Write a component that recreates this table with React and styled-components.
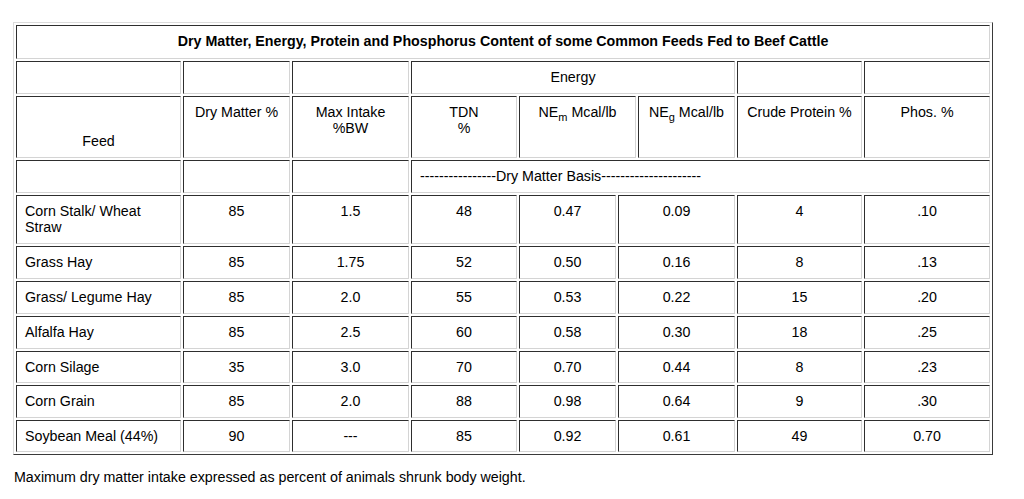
import styled, { createGlobalStyle } from "styled-components";

const GlobalStyle = createGlobalStyle`
    html, body {
        margin: 0;
        padding: 0;
        background: #fff;
    }
    body {
        font-family: "Liberation Sans", Arial, sans-serif;
        font-size: 14.25px;
        color: #000;
    }
`;

const Page = styled.div`
    padding: 22px 0 0 13px;
`;

const FeedTable = styled.table`
    width: 980px;
    table-layout: fixed;
    border-collapse: separate;
    border-spacing: 2px;
    border: 1px solid;
    border-color: #dcdcdc #3a3a3a #3a3a3a #dcdcdc;
`;

const Cell = styled.td`
    box-sizing: border-box;
    border: 1px solid;
    border-color: #2e2e2e #d4d4d4 #d4d4d4 #2e2e2e;
    padding: 0 8px;
    line-height: 16px;
    vertical-align: ${(p) => p.$valign || "top"};
    text-align: ${(p) => p.$align || "center"};
    font-weight: ${(p) => (p.$bold ? "bold" : "normal")};
    height: ${(p) => p.$h || 33}px;
    padding-top: ${(p) => (p.$valign === "bottom" ? 0 : 7)}px;
    padding-bottom: ${(p) => (p.$valign === "bottom" ? 8 : 0)}px;
`;

const Sub = styled.sub`
    font-size: 11px;
    line-height: 0;
`;

const Note = styled.p`
    margin: 14px 0 0 1px;
    line-height: 16px;
`;

const cols = [165, 107, 117, 106, 97, 18, 97, 125, 126];

const rows = [
    { feed: <>Corn Stalk/ Wheat<br />Straw</>, dm: "85", mi: "1.5", tdn: "48", nem: "0.47", neg: "0.09", cp: "4", p: ".10", h: 49 },
    { feed: "Grass Hay", dm: "85", mi: "1.75", tdn: "52", nem: "0.50", neg: "0.16", cp: "8", p: ".13" },
    { feed: "Grass/ Legume Hay", dm: "85", mi: "2.0", tdn: "55", nem: "0.53", neg: "0.22", cp: "15", p: ".20" },
    { feed: "Alfalfa Hay", dm: "85", mi: "2.5", tdn: "60", nem: "0.58", neg: "0.30", cp: "18", p: ".25" },
    { feed: "Corn Silage", dm: "35", mi: "3.0", tdn: "70", nem: "0.70", neg: "0.44", cp: "8", p: ".23", h: 32 },
    { feed: "Corn Grain", dm: "85", mi: "2.0", tdn: "88", nem: "0.98", neg: "0.64", cp: "9", p: ".30" },
    { feed: "Soybean Meal (44%)", dm: "90", mi: "---", tdn: "85", nem: "0.92", neg: "0.61", cp: "49", p: "0.70", h: 32 },
];

export default function App() {
    return (
        <Page>
            <GlobalStyle />
            <FeedTable>
                <colgroup>
                    {cols.map((w, i) => (
                        <col key={i} style={{ width: w }} />
                    ))}
                </colgroup>
                <tbody>
                    <tr>
                        <Cell colSpan={9} $bold $h={34}>
                            Dry Matter, Energy, Protein and Phosphorus Content of some Common Feeds Fed to Beef Cattle
                        </Cell>
                    </tr>
                    <tr>
                        <Cell />
                        <Cell />
                        <Cell />
                        <Cell colSpan={4}>Energy</Cell>
                        <Cell />
                        <Cell />
                    </tr>
                    <tr>
                        <Cell $valign="bottom" $h={62}>Feed</Cell>
                        <Cell $h={62}>Dry Matter %</Cell>
                        <Cell $h={62}>Max Intake<br />%BW</Cell>
                        <Cell $h={62}>TDN<br />%</Cell>
                        <Cell colSpan={2} $h={62}>NE<Sub>m</Sub> Mcal/lb</Cell>
                        <Cell $h={62}>NE<Sub>g</Sub> Mcal/lb</Cell>
                        <Cell $h={62}>Crude Protein %</Cell>
                        <Cell $h={62}>Phos. %</Cell>
                    </tr>
                    <tr>
                        <Cell />
                        <Cell />
                        <Cell />
                        <Cell colSpan={6} $align="left">
                            ----------------Dry Matter Basis---------------------
                        </Cell>
                    </tr>
                    {rows.map((r, i) => (
                        <tr key={i}>
                            <Cell $align="left" $h={r.h}>{r.feed}</Cell>
                            <Cell $h={r.h}>{r.dm}</Cell>
                            <Cell $h={r.h}>{r.mi}</Cell>
                            <Cell $h={r.h}>{r.tdn}</Cell>
                            <Cell $h={r.h}>{r.nem}</Cell>
                            <Cell colSpan={2} $h={r.h}>{r.neg}</Cell>
                            <Cell $h={r.h}>{r.cp}</Cell>
                            <Cell $h={r.h}>{r.p}</Cell>
                        </tr>
                    ))}
                </tbody>
            </FeedTable>
            <Note>Maximum dry matter intake expressed as percent of animals shrunk body weight.</Note>
        </Page>
    );
}
